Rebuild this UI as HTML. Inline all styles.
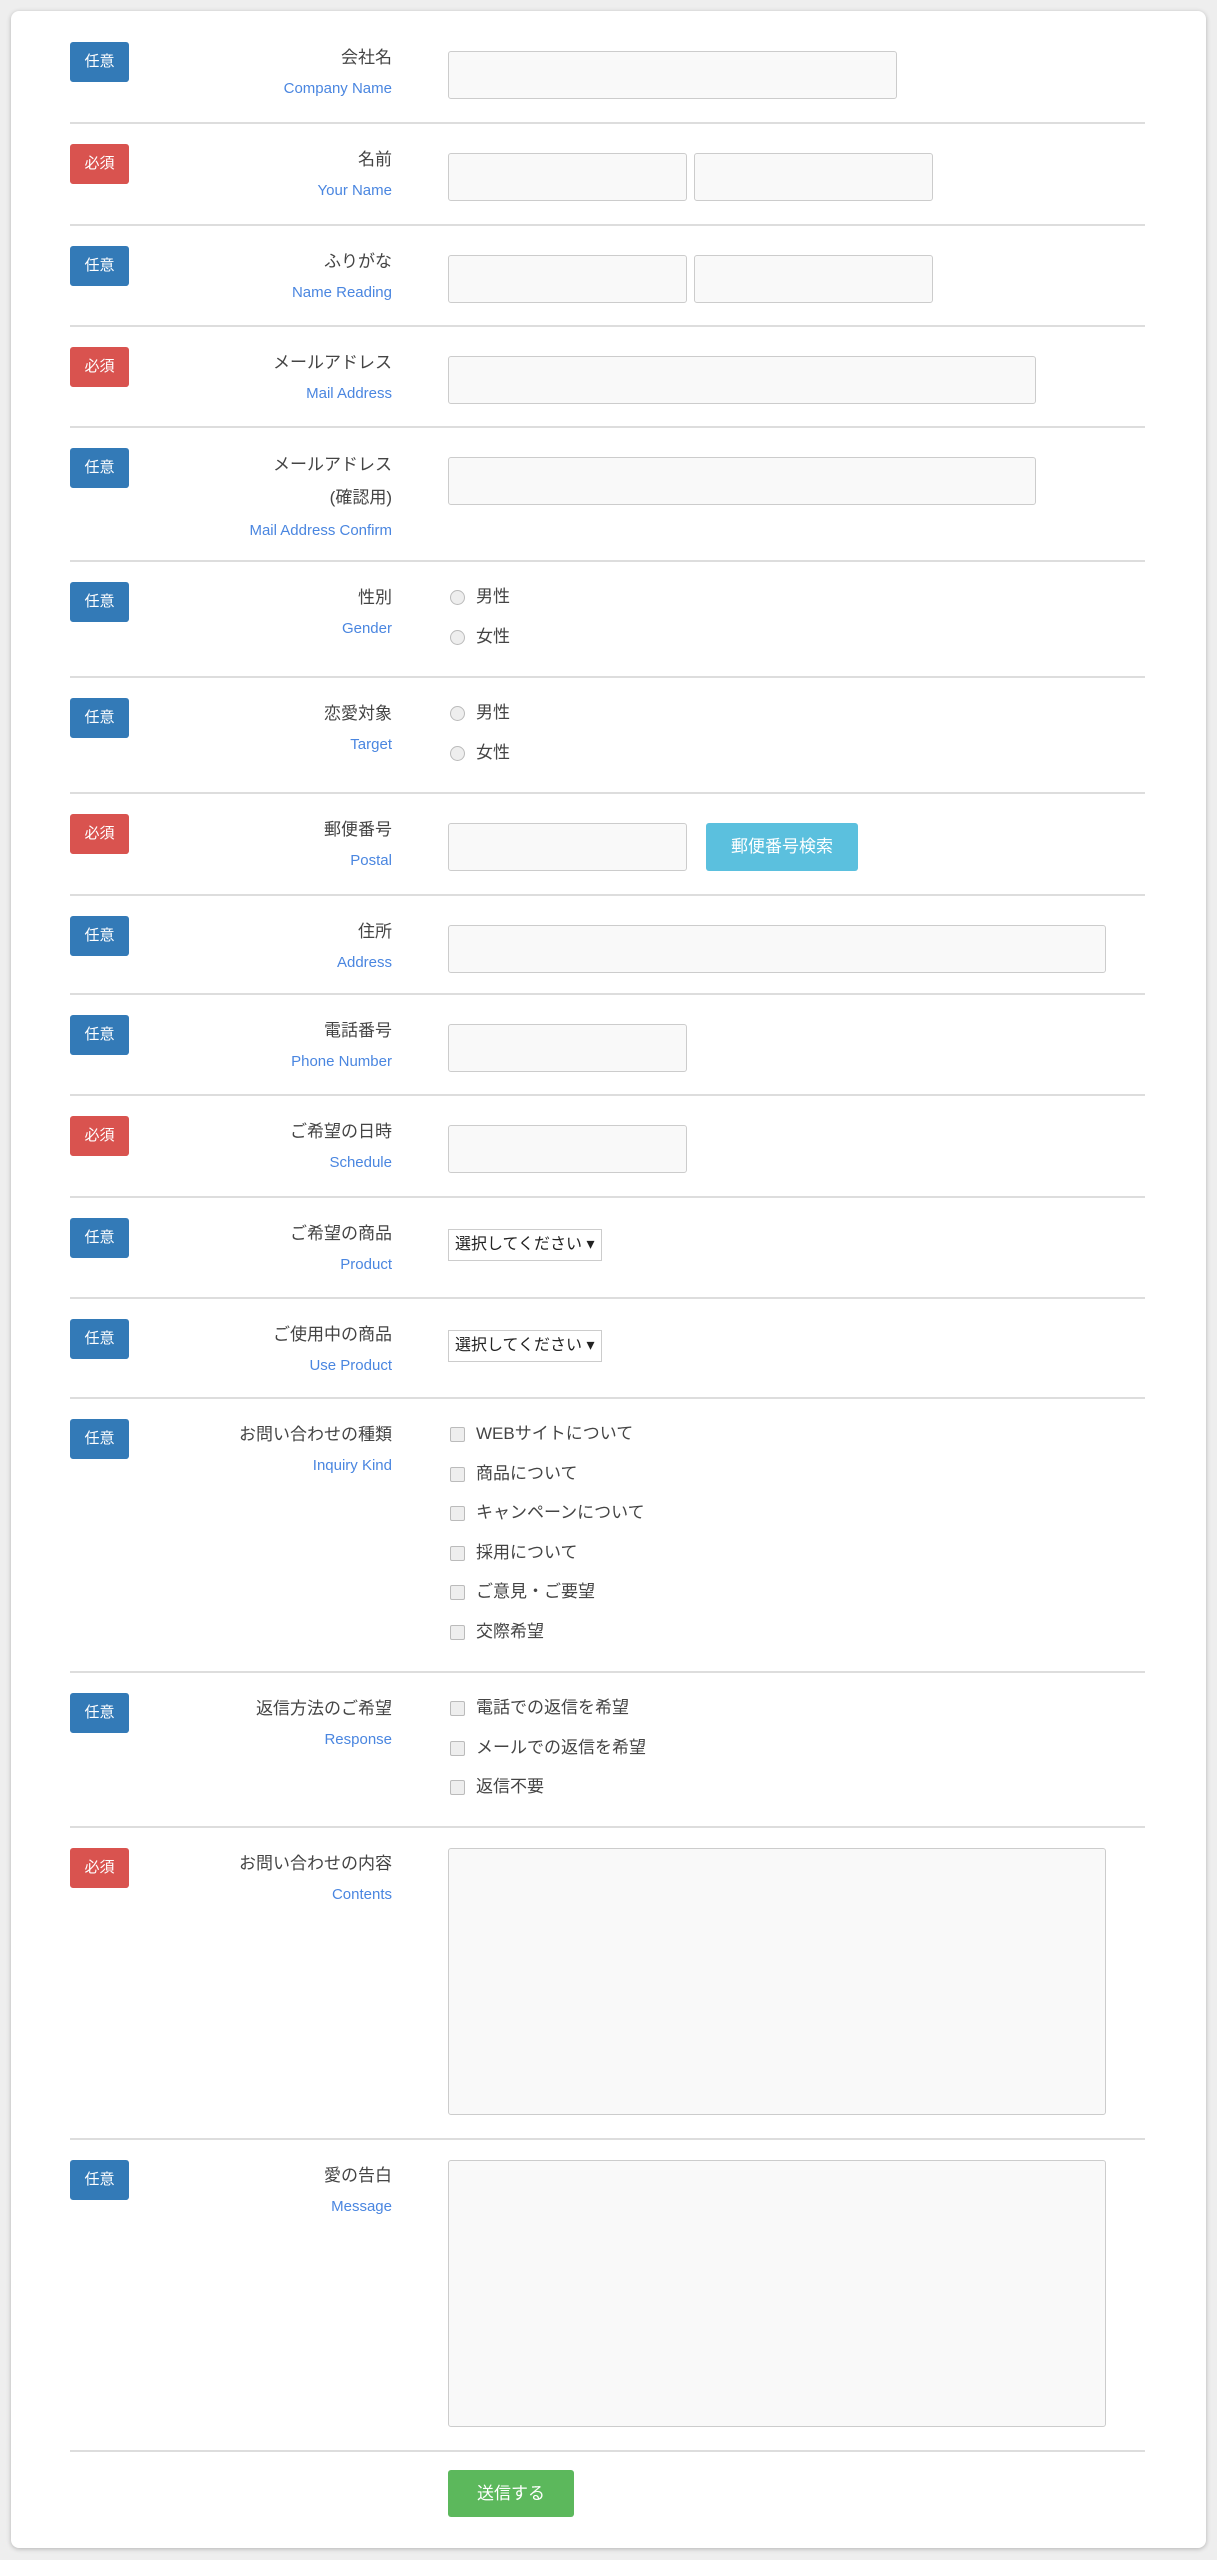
<!DOCTYPE html>
<html><head><meta charset="utf-8"><style>
*{box-sizing:border-box;margin:0;padding:0}
body{width:1217px;height:2560px;background:#eeeeee;font-family:"Liberation Sans","Noto Sans CJK JP",sans-serif;position:relative;overflow:hidden}
.card{position:absolute;left:11px;top:11px;width:1195px;height:2537px;background:#fff;border-radius:8px;box-shadow:0 1px 5px rgba(0,0,0,.25)}
.row{position:absolute;left:70px;width:1075px;border-bottom:2px solid #ddd}
.b{position:absolute;left:0;top:20px;width:59px;height:40px;border-radius:3px;color:#fff;font-size:15px;line-height:40px;text-align:center}
.o{background:#337ab7}.r{background:#d9534f}
.l{position:absolute;left:0;top:20px;width:322px;text-align:right;font-size:17px;line-height:31px;color:#444}
.l span{display:block;color:#4a86e0;font-size:15px}
.f{position:absolute;left:378px;top:29px}
.i{display:inline-block;height:48px;background:#f9f9f9;border:1px solid #ccc;border-radius:3px;vertical-align:top}
.opt{font-size:17px;line-height:39.5px;color:#444;position:relative;padding-left:28px}
.opt:before{content:"";position:absolute;left:2px;top:13px;width:13px;height:13px;border:1px solid #bbb;background:#eee}
.rad:before{border-radius:50%}
.chk:before{border-radius:2px}
.sel{display:inline-block;height:32px;border:1px solid #ccc;background:#fff;font-size:16px;line-height:30px;padding:0 6px;color:#222}
</style></head><body>
<div class="card"></div>

<div class="row" style="top:22px;height:102px"><div class="b o">任意</div><div class="l">会社名<span>Company Name</span></div><div class="f"><div class="i" style="width:449px"></div></div></div>

<div class="row" style="top:124px;height:102px"><div class="b r">必須</div><div class="l">名前<span>Your Name</span></div><div class="f"><div class="i" style="width:239px"></div><div class="i" style="width:239px;margin-left:7px"></div></div></div>

<div class="row" style="top:226px;height:101px"><div class="b o">任意</div><div class="l">ふりがな<span>Name Reading</span></div><div class="f"><div class="i" style="width:239px"></div><div class="i" style="width:239px;margin-left:7px"></div></div></div>

<div class="row" style="top:327px;height:101px"><div class="b r">必須</div><div class="l">メールアドレス<span>Mail Address</span></div><div class="f"><div class="i" style="width:588px"></div></div></div>

<div class="row" style="top:428px;height:134px"><div class="b o">任意</div><div class="l" style="line-height:33px">メールアドレス<br>(確認用)<span>Mail Address Confirm</span></div><div class="f"><div class="i" style="width:588px"></div></div></div>

<div class="row" style="top:562px;height:116px"><div class="b o">任意</div><div class="l">性別<span>Gender</span></div><div class="f" style="top:15px"><div class="opt rad">男性</div><div class="opt rad">女性</div></div></div>

<div class="row" style="top:678px;height:116px"><div class="b o">任意</div><div class="l">恋愛対象<span>Target</span></div><div class="f" style="top:15px"><div class="opt rad">男性</div><div class="opt rad">女性</div></div></div>

<div class="row" style="top:794px;height:102px"><div class="b r">必須</div><div class="l">郵便番号<span>Postal</span></div><div class="f"><div class="i" style="width:239px"></div><div style="display:inline-block;vertical-align:top;margin-left:19px;width:152px;height:48px;background:#5bc0de;border-radius:3px;color:#fff;font-size:17px;line-height:48px;text-align:center">郵便番号検索</div></div></div>

<div class="row" style="top:896px;height:99px"><div class="b o">任意</div><div class="l">住所<span>Address</span></div><div class="f"><div class="i" style="width:658px"></div></div></div>

<div class="row" style="top:995px;height:101px"><div class="b o">任意</div><div class="l">電話番号<span>Phone Number</span></div><div class="f"><div class="i" style="width:239px"></div></div></div>

<div class="row" style="top:1096px;height:102px"><div class="b r">必須</div><div class="l">ご希望の日時<span>Schedule</span></div><div class="f"><div class="i" style="width:239px"></div></div></div>

<div class="row" style="top:1198px;height:101px"><div class="b o">任意</div><div class="l">ご希望の商品<span>Product</span></div><div class="f" style="top:31px"><div class="sel">選択してください ▾</div></div></div>

<div class="row" style="top:1299px;height:100px"><div class="b o">任意</div><div class="l">ご使用中の商品<span>Use Product</span></div><div class="f" style="top:31px"><div class="sel">選択してください ▾</div></div></div>

<div class="row" style="top:1399px;height:274px"><div class="b o">任意</div><div class="l">お問い合わせの種類<span>Inquiry Kind</span></div><div class="f" style="top:15px"><div class="opt chk">WEBサイトについて</div><div class="opt chk">商品について</div><div class="opt chk">キャンペーンについて</div><div class="opt chk">採用について</div><div class="opt chk">ご意見・ご要望</div><div class="opt chk">交際希望</div></div></div>

<div class="row" style="top:1673px;height:155px"><div class="b o">任意</div><div class="l">返信方法のご希望<span>Response</span></div><div class="f" style="top:15px"><div class="opt chk">電話での返信を希望</div><div class="opt chk">メールでの返信を希望</div><div class="opt chk">返信不要</div></div></div>

<div class="row" style="top:1828px;height:312px"><div class="b r">必須</div><div class="l">お問い合わせの内容<span>Contents</span></div><div class="f" style="top:20px"><div class="i" style="width:658px;height:267px"></div></div></div>

<div class="row" style="top:2140px;height:312px"><div class="b o">任意</div><div class="l">愛の告白<span>Message</span></div><div class="f" style="top:20px"><div class="i" style="width:658px;height:267px"></div></div></div>

<div style="position:absolute;left:448px;top:2470px;width:126px;height:47px;background:#5cb85c;border-radius:3px;color:#fff;font-size:17px;line-height:47px;text-align:center">送信する</div>
</body></html>
